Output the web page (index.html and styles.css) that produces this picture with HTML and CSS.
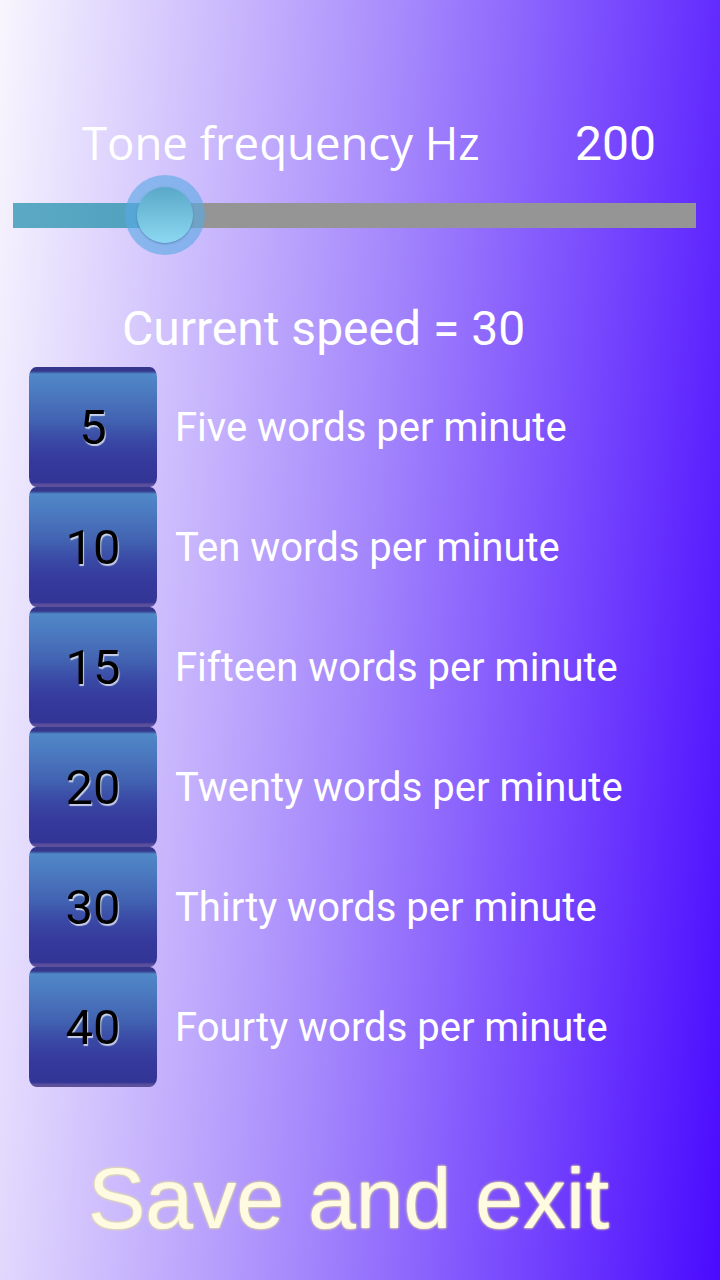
FILE: index.html
```html
<!DOCTYPE html>
<html>
<head>
<meta charset="utf-8">
<link rel="stylesheet" href="styles.css">
</head>
<body>
<div class="screen">
  <div class="tone-row">
    <span class="tone-label">Tone frequency Hz</span>
    <span class="tone-value">200</span>
  </div>
  <div class="slider">
    <div class="track">
      <div class="fill"></div>
    </div>
    <div class="thumb"><div class="thumb-core"></div></div>
  </div>
  <div class="current">Current speed = 30</div>
  <div class="list">
    <div class="row"><div class="btn">5</div><div class="label">Five words per minute</div></div>
    <div class="row"><div class="btn">10</div><div class="label">Ten words per minute</div></div>
    <div class="row"><div class="btn">15</div><div class="label">Fifteen words per minute</div></div>
    <div class="row"><div class="btn">20</div><div class="label">Twenty words per minute</div></div>
    <div class="row"><div class="btn">30</div><div class="label">Thirty words per minute</div></div>
    <div class="row"><div class="btn">40</div><div class="label">Fourty words per minute</div></div>
  </div>
  <div class="save">Save and exit</div>
</div>
</body>
</html>
```
FILE: styles.css
```css
html, body {
  margin: 0;
  padding: 0;
}
body {
  width: 720px;
  height: 1280px;
  overflow: hidden;
  background: linear-gradient(95deg, #f8f6fe 0%, #a486fc 50%, #4a0aff 100%);
  font-family: Roboto, "Noto Sans", sans-serif;
  color: #ffffff;
}
.screen {
  display: flex;
  flex-direction: column;
  height: 1280px;
}
.tone-row {
  display: flex;
  align-items: baseline;
  padding-top: 114px;
  height: 56px;
  line-height: 56px;
}
.tone-label {
  font-family: "Open Sans", "Noto Sans", sans-serif;
  font-size: 45.5px;
  margin-left: 82px;
  width: 493px;
}
.tone-value {
  font-size: 48px;
}
.slider {
  position: relative;
  margin: 3px 24px 0 13px;
  height: 84px;
  display: flex;
  align-items: center;
}
.track {
  flex: 1;
  height: 25px;
  background: #959595;
  display: flex;
}
.fill {
  width: 152px;
  height: 100%;
  background: linear-gradient(to right, #5ba9c4, #4fa0bf);
}
.thumb {
  position: absolute;
  left: 112px;
  top: 2px;
  width: 80px;
  height: 80px;
  border-radius: 50%;
  background: rgba(88, 170, 228, 0.62);
  display: flex;
  align-items: center;
  justify-content: center;
}
.thumb-core {
  width: 56px;
  height: 56px;
  border-radius: 50%;
  background: linear-gradient(to bottom, #5aa8c8, #8cd8f2);
  box-shadow: 0 1px 2px rgba(40, 90, 130, 0.5);
}
.current {
  margin-top: 44px;
  margin-left: 122px;
  font-size: 48px;
  height: 56px;
  line-height: 56px;
}
.list {
  margin-top: 10px;
  display: flex;
  flex-direction: column;
}
.row {
  display: flex;
  align-items: center;
  height: 120px;
}
.btn {
  margin-left: 29px;
  width: 128px;
  height: 120px;
  box-sizing: border-box;
  border-radius: 7px / 10px;
  background: linear-gradient(to bottom,
    #35378c 0px, #35378c 4px,
    #5088c8 7px, #4a76bd 25%,
    #4262b1 45%, #3a4aa6 60%,
    #35399b 78%, #323596 96%,
    #5c4f9c 98%, #5c4f9c 100%);
  display: flex;
  align-items: center;
  justify-content: center;
  color: #000000;
  font-size: 49px;
  text-shadow: 1px 2px 1px rgba(225, 230, 245, 0.85);
}
.label {
  margin-left: 18px;
  font-size: 40px;
}
.save {
  margin-top: 61px;
  margin-left: 88px;
  font-family: "Liberation Sans", Arial, sans-serif;
  font-size: 86px;
  height: 100px;
  line-height: 100px;
  color: #fffbe3;
  text-shadow: 0 0 3px #f0ea8a, 0 0 2px #f0ea8a;
}
```
